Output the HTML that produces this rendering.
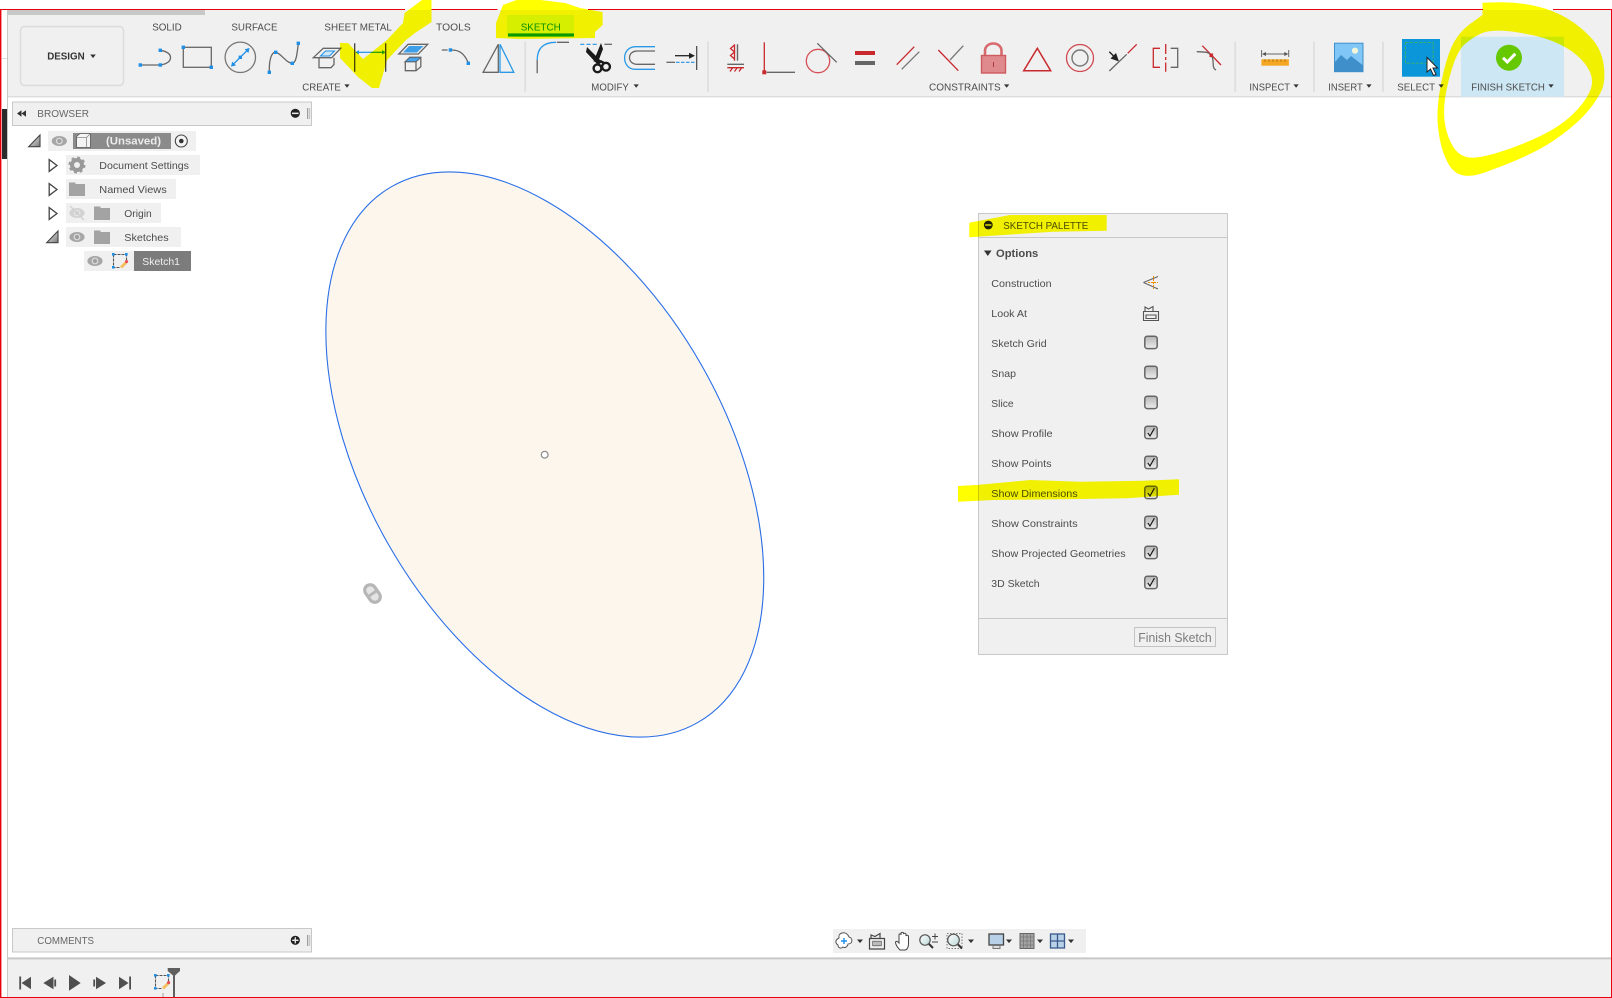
<!DOCTYPE html>
<html><head><meta charset="utf-8"><title>Sketch</title>
<style>
html,body{margin:0;padding:0;background:#fff;width:1612px;height:998px;overflow:hidden}
svg{display:block;position:absolute;left:0;top:0}
text{font-family:"Liberation Sans",Arial,sans-serif;font-size:10.5px;fill:#4c4c4c}
.h{mix-blend-mode:multiply;fill:#ffff00}
.l{stroke:#666;stroke-width:1.3;fill:none}
.b{fill:#1e90e8}
.r{stroke:#c9282d;stroke-width:1.3;fill:none}
.sep{fill:#e0e0e0}
.car{fill:#333}
.row{fill:#f0f0f0}
</style></head><body>
<svg width="1612" height="998" viewBox="0 0 1612 998" xmlns="http://www.w3.org/2000/svg">
<defs>
<linearGradient id="tri" x1="0" y1="0" x2="1" y2="1"><stop offset="0" stop-color="#fff"/><stop offset="1" stop-color="#777"/></linearGradient>
<linearGradient id="cb" x1="0" y1="0" x2="0" y2="1"><stop offset="0" stop-color="#b4b4b4"/><stop offset="1" stop-color="#eeeeee"/></linearGradient>
<linearGradient id="mag" x1="0" y1="0" x2="1" y2="1"><stop offset="0" stop-color="#fff"/><stop offset="1" stop-color="#bcd8d8"/></linearGradient>
<g id="eye"><ellipse rx="7.6" ry="5" fill="#a6a6a6"/><circle r="3.4" fill="#dcdcdc"/><circle r="2.2" fill="#a0a0a0"/></g>
<path id="folder" d="M0 1.5H6.5V3H16V15H0Z" fill="#a3a3a3"/>
<g id="cbx"><rect x="-6.2" y="-6.2" width="12.4" height="12.4" rx="2.6" fill="url(#cb)" stroke="#666" stroke-width="1.5"/></g>
<g id="chk"><rect x="-6.2" y="-6.2" width="12.4" height="12.4" rx="2.6" fill="url(#cb)" stroke="#666" stroke-width="1.5"/><path d="M-3.2 .5L-1 3.6L3.4-4.2" fill="none" stroke="#111" stroke-width="1.1"/></g>
<g id="skt"><path d="M1.5 1.5H14.5V9M1.5 1.5V14.5H8" fill="none" stroke="#555" stroke-dasharray="3 1" stroke-width="1.1"/><rect width="2.6" height="2.6" class="b"/><rect x="13" width="2.6" height="2.6" class="b"/><rect y="13" width="2.6" height="2.6" class="b"/><path d="M9 14.5L14 9.5" stroke="#f2c060" stroke-width="3"/><circle cx="14.6" cy="8.6" r="1.6" fill="#e8505a"/></g>
</defs>

<!-- frame background -->
<rect x="8" y="10" width="1603" height="87" fill="#f0f0f0"/>
<rect x="8" y="96" width="1603" height="1.4" fill="#dcdcdc"/>
<rect x="8" y="10" width="197" height="5" fill="#c8c8c8"/>
<rect x="7" y="10" width="1" height="987" fill="#c8c8c8"/>
<rect x="2" y="58" width="5" height="1" fill="#dedede"/>
<rect x="2" y="109" width="5" height="50" fill="#2b2b2b"/>

<!-- design -->
<rect x="20.5" y="26.5" width="103" height="59" rx="4" fill="#f0f0f0" stroke="#dcdcdc" stroke-width="1.6"/>
<text x="47.2" y="59.6" font-weight="bold" textLength="37.5" lengthAdjust="spacingAndGlyphs" style="font-weight:bold;fill:#333">DESIGN</text>
<path class="car" d="M90.2 54.5h5.6l-2.8 3.6z"/>

<!-- tabs -->
<text x="152.2" y="30.5" textLength="29.6" lengthAdjust="spacingAndGlyphs">SOLID</text>
<text x="231.4" y="30.5" textLength="46.1" lengthAdjust="spacingAndGlyphs">SURFACE</text>
<text x="324.4" y="30.5" textLength="67.5" lengthAdjust="spacingAndGlyphs">SHEET METAL</text>
<text x="436" y="30.5" textLength="34.7" lengthAdjust="spacingAndGlyphs">TOOLS</text>
<rect x="507" y="15" width="67" height="21.7" fill="#d6eff9"/>
<rect x="508" y="33.4" width="66" height="3.2" fill="#0a9a00"/>
<text x="520.7" y="30.5" textLength="40" lengthAdjust="spacingAndGlyphs" style="fill:#0a8f00">SKETCH</text>

<!-- create icons -->
<path class="l" d="M140.3 65H160.3M160.3 50.3Q170.5 52 170.5 57.6T160.3 65"/>
<rect x="138.6" y="63.3" width="3.4" height="3.4" class="b"/><rect x="158.6" y="63.3" width="3.4" height="3.4" class="b"/><rect x="158.6" y="48.6" width="3.4" height="3.4" class="b"/>
<rect class="l" x="183.3" y="47.3" width="28" height="20"/>
<rect x="181.6" y="45.6" width="3.4" height="3.4" class="b"/><rect x="209.6" y="65.6" width="3.4" height="3.4" class="b"/>
<circle class="l" cx="240.3" cy="57.3" r="15.2" stroke-width="1.2" style="stroke:#777"/>
<path d="M232 65.6L248.6 49" stroke="#1e90e8" stroke-width="1.3"/>
<path class="b" d="M231 66.6l1.2-5 3.8 3.8zM249.6 48l-1.2 5-3.8-3.8z"/><rect x="238.6" y="55.6" width="3.4" height="3.4" class="b"/>
<path class="l" d="M269.3 72.3C269 58 272 52 275.7 52.3C281 53 286 63 292.3 63.3C296 63 297 55 298.3 43.3"/>
<rect x="267.6" y="70.6" width="3.4" height="3.4" class="b"/><rect x="274" y="50.6" width="3.4" height="3.4" class="b"/><rect x="290.6" y="61.6" width="3.4" height="3.4" class="b"/><rect x="296.6" y="41.6" width="3.4" height="3.4" class="b"/>
<path class="l" d="M313.3 57.7L323.3 48.3H340.7L331.7 57.7ZM319 57.7V67.7H331L334 64.5V57.7"/>
<path d="M320.5 56L325.5 51H334.5L329.5 56Z" fill="#cfe6f7" stroke="#1e90e8" stroke-width="1"/>
<path d="M354.7 43.3V71.7M385.7 43.3V71.7" stroke="#333" stroke-width="1.2"/>
<path d="M357 52.3H371" stroke="#1e90e8" stroke-width="1.2"/><path d="M371 52.3H384" stroke="#1a9a30" stroke-width="1.2"/>
<path class="b" d="M355.5 52.3l3.4-2.2v4.4z"/><path fill="#1a9a30" d="M385.5 52.3l-3.4-2.2v4.4z"/>
<path class="l" d="M398.8 54L408 44.3H427.7L418.4 54Z"/><path class="b" d="M403 52.5L409 46H423.5L417 52.5Z" opacity=".85"/>
<path class="l" d="M405.3 61.7V70.7H416L420.8 66.7V57.3H409.8L405.3 61.7H416V70.7M416 61.7L420.8 57.3"/><path class="b" d="M405.8 61.4L410 57.8H420.3L415.8 61.4Z" opacity=".8"/>
<path class="l" d="M441.8 50H447.6M452 50C459 50 465 54 468.3 63.3"/>
<rect x="448.7" y="48.3" width="3.4" height="3.4" class="b"/><rect x="466.6" y="61.6" width="3.4" height="3.4" class="b"/>
<path class="l" d="M483.1 72.3L498.3 44.3V72.3Z"/><path d="M500 44.3L513.8 72.3H500Z" fill="none" stroke="#2a9ae8" stroke-width="1.3"/>
<text x="302.3" y="90.7" textLength="38.6" lengthAdjust="spacingAndGlyphs">CREATE</text>
<path class="car" d="M344.4 84.4h5.2l-2.6 3.4z"/>
<rect class="sep" x="524.2" y="41.7" width="2" height="50"/>

<!-- modify -->
<path class="l" d="M537.2 73.3V60M556.8 42.3H569"/>
<path d="M537.2 60Q537.2 42.3 556 42.3" fill="none" stroke="#2a9ae8" stroke-width="1.3"/>
<path d="M580.3 44.3H598.5" stroke="#1e90e8" stroke-width="1.2" stroke-dasharray="4 2.2"/><path class="l" d="M604.4 44.3H612"/>
<path d="M587 47L602 62L598 65L586 52Z" fill="#1a1a1a"/>
<path d="M601 43L603 49L598 62L593.5 61.5Z" fill="#1a1a1a"/>
<path d="M598 62L598.5 65M600 61L604 63" stroke="#1a1a1a" stroke-width="2.4"/>
<circle cx="597.5" cy="68.3" r="3.9" fill="none" stroke="#1a1a1a" stroke-width="2.4"/><circle cx="606" cy="66.7" r="3.9" fill="none" stroke="#1a1a1a" stroke-width="2.4"/>
<path d="M655 46.7H635.4C621 46.7 621 69.3 635.4 69.3H655" fill="none" stroke="#2a9ae8" stroke-width="1.3"/>
<path class="l" d="M655 51H637C627 51 627 64.3 637 64.3H655"/>
<path d="M696.7 46V70" stroke="#444" stroke-width="1.2"/><path class="l" d="M666.4 62.3H675"/>
<path d="M676 62.3H695" stroke="#1e90e8" stroke-width="1.2" stroke-dasharray="3.5 1.5"/>
<path d="M675 55.7H690" stroke="#222" stroke-width="1.3"/><path fill="#222" d="M695 55.7l-6-3v6z"/>
<text x="591.3" y="90.7" textLength="37.5" lengthAdjust="spacingAndGlyphs">MODIFY</text>
<path class="car" d="M633.6 84.4h5.2l-2.6 3.4z"/>
<rect class="sep" x="707" y="41.7" width="2" height="50"/>

<!-- constraints -->
<path d="M737.5 44.3V60.7" stroke="#666" stroke-width="1.4"/><path class="r" d="M734.5 44.3V60.7M734.5 45L730.5 48.5L734.5 52L730.5 55.5L734.5 59"/>
<path d="M727.3 64.3H744" stroke="#666" stroke-width="1.4"/><path class="r" d="M727.3 67.7H744M730 71.5L732.5 68M734.5 71.5L737 68M739 71.5L741.5 68"/>
<path d="M764.3 42.3V71" stroke="#c9282d" stroke-width="1.3"/><rect x="762.3" y="70.3" width="4" height="4" fill="#c9282d"/><path d="M766.7 72.3H795" stroke="#666" stroke-width="1.3"/>
<circle cx="818" cy="61" r="11.7" fill="none" stroke="#d85057" stroke-width="1.3"/><path d="M817.3 43.3L836.7 62.3" stroke="#666" stroke-width="1.3"/>
<rect x="855" y="51" width="20" height="4" fill="#c9282d"/><rect x="855" y="61" width="20" height="4" fill="#666"/>
<path class="r" d="M896.7 64.7L914.3 46.7"/><path d="M901.7 69.3L919.3 51.7" stroke="#777" stroke-width="1.3"/>
<path class="r" d="M938.3 50L958.3 70.7"/><path d="M950 60L963.3 45.7" stroke="#777" stroke-width="1.3"/>
<path d="M985 55.3V51C985 41 1001.5 41 1001.5 51V55.3" fill="none" stroke="#d86a6e" stroke-width="2.6"/>
<rect x="981.5" y="55.5" width="24" height="17.5" fill="#df8b8d" stroke="#cf5a5e" stroke-width="1.4"/><path d="M993.5 62V67" stroke="#a83a3e" stroke-width="1"/>
<path d="M1037.3 48.3L1050.7 70.7H1023.7Z" fill="none" stroke="#c9282d" stroke-width="1.5"/>
<circle cx="1080" cy="58" r="13.5" fill="none" stroke="#d04a50" stroke-width="1.3"/><circle cx="1080" cy="58" r="8" fill="none" stroke="#777" stroke-width="1.4"/>
<path d="M1109.3 51.7L1116 58.4" stroke="#222" stroke-width="1.4"/><path fill="#222" d="M1119 61.5L1110.5 58.5L1116 53Z"/>
<path d="M1109.3 71L1126.7 54.3" stroke="#666" stroke-width="1.3"/><path class="r" d="M1127.7 53.3L1136.7 44.3"/>
<path class="r" d="M1160 48.3H1153.3V67.3H1160"/><path class="l" d="M1170.7 48.3H1177.7V67.3H1170.7"/>
<path d="M1165.7 44V54M1165.7 57V60M1165.7 62.5V71.7" stroke="#c9282d" stroke-width="1.3"/>
<path class="r" d="M1202.3 45.7L1221 65"/><path class="l" d="M1196.7 51.7C1205 52 1208 51.5 1211.3 55.3C1215 60 1211 68 1216 70"/><rect x="1209.5" y="53.5" width="3.6" height="3.6" fill="#c9282d"/>
<text x="929" y="90.7" textLength="71.7" lengthAdjust="spacingAndGlyphs">CONSTRAINTS</text>
<path class="car" d="M1004 84.4h5.3l-2.65 3.4z"/>
<rect class="sep" x="1234.2" y="41.7" width="2" height="50"/>

<!-- inspect -->
<path d="M1261.6 50V57M1288.7 50V57M1263 54H1287.5" stroke="#666" stroke-width="1"/>
<path fill="#555" d="M1262 54l4-2v4zM1288.3 54l-4-2v4z"/>
<rect x="1261.4" y="59.3" width="27.5" height="6.4" fill="#f5a623"/>
<path d="M1265 59.3v2.6M1269 59.3v2.6M1273 59.3v2.6M1277 59.3v2.6M1281 59.3v2.6M1285 59.3v2.6" stroke="#9a6a10" stroke-width=".8"/>
<text x="1249.4" y="90.7" textLength="40.6" lengthAdjust="spacingAndGlyphs">INSPECT</text>
<path class="car" d="M1293.5 84.4h5.2l-2.6 3.4z"/>
<rect class="sep" x="1313" y="41.7" width="2" height="50"/>

<!-- insert -->
<rect x="1334.5" y="43.2" width="28.5" height="28.5" fill="#80c6f7" stroke="#3f8fc8"/>
<path d="M1335 72V62L1341 55L1347 60L1351 56L1362.5 65V72Z" fill="#3f90ca"/>
<circle cx="1355" cy="50.7" r="3.1" fill="#f3f5d8"/>
<text x="1328.3" y="90.7" textLength="34.5" lengthAdjust="spacingAndGlyphs">INSERT</text>
<path class="car" d="M1366.3 84.4h5.3l-2.65 3.4z"/>
<rect class="sep" x="1382" y="41.7" width="2" height="50"/>

<!-- select -->
<rect x="1402" y="39" width="38" height="37.7" fill="#0a96d8"/>
<rect x="1405.5" y="42.5" width="27.7" height="20.8" fill="none" stroke="#3ab070" stroke-width="1" stroke-dasharray="3 1.5"/>
<path d="M1427 57.5V72L1430.5 69L1433.5 75.5L1436 74.5L1433 68H1437.5Z" fill="#fff" stroke="#222" stroke-width="1"/>
<text x="1397.3" y="90.7" textLength="37.7" lengthAdjust="spacingAndGlyphs">SELECT</text>
<path class="car" d="M1438.5 84.4h5.3l-2.65 3.4z"/>

<!-- finish sketch -->
<rect x="1461" y="36.7" width="103" height="60" fill="#cde8f4"/>
<circle cx="1509" cy="57.7" r="13" fill="#66c800"/>
<path d="M1503 57.8L1507.3 62L1515.3 53.8" fill="none" stroke="#fff" stroke-width="3"/>
<text x="1471.3" y="90.7" textLength="73.6" lengthAdjust="spacingAndGlyphs">FINISH SKETCH</text>
<path class="car" d="M1548.4 84.4h5.3l-2.65 3.4z"/>

<!-- browser panel -->
<rect x="12.5" y="102" width="299" height="23.5" fill="#f0f0f0" stroke="#c8c8c8"/>
<path fill="#333" d="M17 113.5l4.5-3.2v6.4zM21.5 113.5l4.5-3.2v6.4z"/>
<text x="37.3" y="116.8" textLength="51.7" lengthAdjust="spacingAndGlyphs" style="fill:#666">BROWSER</text>
<circle cx="295.3" cy="113.3" r="4.6" fill="#222"/><rect x="292" y="112.6" width="6.6" height="1.5" fill="#eee"/>
<path d="M307.7 108V119" stroke="#888"/><path d="M309.7 108V119" stroke="#bbb"/>

<!-- tree -->
<rect class="row" x="48" y="131" width="148" height="20"/>
<path d="M40 135V146.7H28.7Z" fill="url(#tri)" stroke="#444" stroke-width="1.1"/>
<use href="#eye" x="59.3" y="141"/>
<rect x="73" y="133" width="98" height="16" fill="#8b8b8b"/>
<path d="M76.5 136.5L80 133.5H90.5V147.5H76.5Z" fill="#f4f4f4" stroke="#555" stroke-width=".8"/><path d="M86.5 137.5V147.5M76.5 137.5H86.5L90.5 133.5" fill="none" stroke="#888" stroke-width=".8"/>
<text x="106" y="144.7" textLength="55" lengthAdjust="spacingAndGlyphs" style="font-weight:bold;fill:#ececec;font-size:11px">(Unsaved)</text>
<circle cx="181.3" cy="141" r="6" fill="#f4f4f4" stroke="#444" stroke-width="1.1"/><circle cx="181.3" cy="141" r="2.3" fill="#333"/>

<rect class="row" x="66" y="155" width="134" height="20"/>
<path d="M49.2 159.6V171.4L57 165.5Z" fill="#fff" stroke="#444" stroke-width="1.3"/>
<circle cx="77" cy="165" r="5" fill="none" stroke="#9a9a9a" stroke-width="4"/>
<circle cx="77" cy="165" r="7.4" fill="none" stroke="#9a9a9a" stroke-width="2.2" stroke-dasharray="2.9 2.9"/>
<text x="99.3" y="169" textLength="89.7" lengthAdjust="spacingAndGlyphs">Document Settings</text>

<rect class="row" x="66" y="179" width="110" height="20"/>
<path d="M49.2 183.6V195.4L57 189.5Z" fill="#fff" stroke="#444" stroke-width="1.3"/>
<use href="#folder" x="69" y="181"/>
<text x="99.3" y="193" textLength="67.4" lengthAdjust="spacingAndGlyphs">Named Views</text>

<rect class="row" x="66" y="203" width="95" height="20"/>
<path d="M49.2 207.6V219.4L57 213.5Z" fill="#fff" stroke="#444" stroke-width="1.3"/>
<g opacity=".4"><use href="#eye" x="77" y="213"/><path d="M70 206L84 220" stroke="#a3a3a3" stroke-width="1.4"/></g>
<use href="#folder" x="94" y="205"/>
<text x="124.3" y="217" textLength="27.4" lengthAdjust="spacingAndGlyphs">Origin</text>

<rect class="row" x="66" y="227" width="115" height="20"/>
<path d="M58 231V242.7H46.7Z" fill="url(#tri)" stroke="#444" stroke-width="1.1"/>
<use href="#eye" x="77" y="237"/>
<use href="#folder" x="94" y="229"/>
<text x="124.3" y="241" textLength="44.4" lengthAdjust="spacingAndGlyphs">Sketches</text>

<rect class="row" x="84" y="251" width="50" height="20"/>
<rect x="134" y="251" width="57" height="20" fill="#7c7c7c"/>
<use href="#eye" x="95" y="261"/>
<use href="#skt" x="112" y="253"/>
<text x="142.3" y="265" textLength="37.7" lengthAdjust="spacingAndGlyphs" style="fill:#f0f0f0">Sketch1</text>

<!-- ellipse -->
<ellipse cx="544.8" cy="454.5" rx="308.6" ry="180.4" transform="rotate(60.3 544.8 454.5)" fill="#fdf6ec" stroke="#2a6fe8" stroke-width="1.1"/>
<circle cx="544.7" cy="454.7" r="3.4" fill="#fdfdfd" stroke="#8a8a8a" stroke-width="1.2"/>
<g transform="rotate(-35 372.5 593.5)"><rect x="367" y="584" width="11" height="19" rx="5.5" fill="#e4e4e4" stroke="#b6b6b6" stroke-width="3.2"/><rect x="367" y="592.2" width="11" height="2.8" fill="#b6b6b6"/></g>

<!-- sketch palette -->
<rect x="978.5" y="213.5" width="249" height="441" fill="#f0f0f0" stroke="#c8c8c8"/>
<rect x="979" y="237" width="248" height="1" fill="#c8c8c8"/>
<rect x="979" y="618" width="248" height="1" fill="#c8c8c8"/>
<circle cx="988.3" cy="225" r="4.4" fill="#222"/><rect x="985.2" y="224.3" width="6.2" height="1.4" fill="#eee"/>
<text x="1003.3" y="229" textLength="85" lengthAdjust="spacingAndGlyphs">SKETCH PALETTE</text>
<path fill="#333" d="M984 250.5h7.6l-3.8 5.5z"/>
<text x="996" y="257" textLength="42.3" lengthAdjust="spacingAndGlyphs" style="font-weight:bold;font-size:11px">Options</text>
<text x="991.3" y="287" textLength="60.3" lengthAdjust="spacingAndGlyphs">Construction</text>
<text x="991.3" y="317" textLength="35.7" lengthAdjust="spacingAndGlyphs">Look At</text>
<text x="991.3" y="347" textLength="55.3" lengthAdjust="spacingAndGlyphs">Sketch Grid</text>
<text x="991.3" y="377" textLength="24.7" lengthAdjust="spacingAndGlyphs">Snap</text>
<text x="991.3" y="407" textLength="22.3" lengthAdjust="spacingAndGlyphs">Slice</text>
<text x="991.3" y="437" textLength="61.3" lengthAdjust="spacingAndGlyphs">Show Profile</text>
<text x="991.3" y="467" textLength="60.3" lengthAdjust="spacingAndGlyphs">Show Points</text>
<text x="991.3" y="497" textLength="86.3" lengthAdjust="spacingAndGlyphs">Show Dimensions</text>
<text x="991.3" y="527" textLength="86.3" lengthAdjust="spacingAndGlyphs">Show Constraints</text>
<text x="991.3" y="557" textLength="134.3" lengthAdjust="spacingAndGlyphs">Show Projected Geometries</text>
<text x="991.3" y="587" textLength="48.3" lengthAdjust="spacingAndGlyphs">3D Sketch</text>
<path d="M1143.5 282.5L1158 276.5M1143.5 282.5L1158 289" stroke="#666" stroke-width="1.1" fill="none"/>
<path d="M1148 282.5H1158M1153.5 276V289" stroke="#f08c00" stroke-width="1" stroke-dasharray="2 1" fill="none"/>
<path d="M1143.5 311.5V320.5H1158.5V311.5ZM1146 315H1156V318.5H1146ZM1145 311V307L1148.5 309L1153 306.5V311" fill="none" stroke="#555" stroke-width="1.1"/>
<use href="#cbx" x="1151" y="342.4"/>
<use href="#cbx" x="1151" y="372.4"/>
<use href="#cbx" x="1151" y="402.4"/>
<use href="#chk" x="1151" y="432.4"/>
<use href="#chk" x="1151" y="462.4"/>
<use href="#chk" x="1151" y="492.4"/>
<use href="#chk" x="1151" y="522.4"/>
<use href="#chk" x="1151" y="552.4"/>
<use href="#chk" x="1151" y="582.4"/>
<rect x="1134.5" y="627.5" width="81" height="19" fill="#f0f0f0" stroke="#c4c4c4"/>
<text x="1138.3" y="642" textLength="73.4" lengthAdjust="spacingAndGlyphs" style="font-size:12.5px;fill:#7c7c7c">Finish Sketch</text>

<!-- comments -->
<rect x="12.5" y="928.5" width="299" height="23.5" fill="#f0f0f0" stroke="#c8c8c8"/>
<text x="37.3" y="944" textLength="56.7" lengthAdjust="spacingAndGlyphs" style="fill:#666">COMMENTS</text>
<circle cx="295.3" cy="940.3" r="4.6" fill="#222"/><path d="M292.2 940.3H298.4M295.3 937.2V943.4" stroke="#eee" stroke-width="1.3"/>
<path d="M307.7 935V946" stroke="#888"/><path d="M309.7 935V946" stroke="#bbb"/>

<!-- navbar -->
<rect x="833" y="929" width="253" height="24" fill="#f0f0f0"/>
<path d="M842 933C838 934 839 937 839 938C835 940 835 943 838 945C838 948 841 949 843 947C846 949 848 945 848 944C853 944 853 938 849 937C848 934 845 932 842 933Z" fill="#fff" stroke="#555" stroke-width="1"/>
<path d="M841 941H847M844 938V944" stroke="#1e90e8" stroke-width="1.4"/>
<path class="car" d="M857 939.5h6l-3 3.6z"/>
<path d="M869.5 938.5V949H884.5V938.5ZM873 941.5H881V945.5H873ZM871 938V935L875 936.5L880 933.5V938" fill="none" stroke="#444" stroke-width="1.2"/>
<rect x="873" y="941.5" width="8" height="4" fill="#bbb"/>
<path d="M900 950C897 947 895.5 944 895.5 942C896 941 897.5 941 899 943V935C899 933.5 901 933.5 901 935V933.5C901 932 903.5 932 903.5 933.5V934C904 933 906 933 906 934.5V936C906.5 935 908.5 935 908.5 936.5V944C908.5 947 907 950 905 950Z" fill="#fff" stroke="#444" stroke-width="1"/>
<circle cx="925" cy="940" r="5.2" fill="url(#mag)" stroke="#555" stroke-width="1.2"/><path d="M929 944L933 948" stroke="#333" stroke-width="2"/>
<path d="M932 936.5H938M935 933.5V939.5M932 942H938" stroke="#444" stroke-width="1"/>
<rect x="947" y="933.5" width="15" height="15" fill="none" stroke="#777" stroke-dasharray="1.5 1.5"/>
<circle cx="953.5" cy="940" r="5.8" fill="url(#mag)" stroke="#555" stroke-width="1.2"/><path d="M958 944.5L962 948.5" stroke="#333" stroke-width="2"/>
<path class="car" d="M968 939.5h6l-3 3.6z"/>
<rect x="989" y="934" width="14.5" height="11" fill="#b8d0e8" stroke="#444" stroke-width="1.3"/><path d="M993 948.5H1000V945.5H993Z" fill="#ddd" stroke="#777"/>
<path class="car" d="M1006 939.5h6l-3 3.6z"/>
<rect x="1020" y="933.5" width="14" height="15" fill="#a4a4a4" stroke="#666"/>
<path d="M1023.5 933.5V948.5M1027 933.5V948.5M1030.5 933.5V948.5M1020 937H1034M1020 941H1034M1020 945H1034" stroke="#777" stroke-width=".8"/>
<path class="car" d="M1037 939.5h6l-3 3.6z"/>
<rect x="1050.5" y="934" width="14" height="14" fill="#b8d0e8" stroke="#3a5a8c" stroke-width="1.3"/><path d="M1057.5 934V948M1050.5 941H1064.5" stroke="#3a5a8c" stroke-width="1.3"/>
<path class="car" d="M1068 939.5h6l-3 3.6z"/>

<!-- timeline -->
<rect x="8" y="959" width="1603" height="38" fill="#f0f0f0"/>
<rect x="8" y="957.4" width="1603" height="2" fill="#c8c8c8"/>
<g fill="#4f4f4f">
<rect x="19.3" y="976.5" width="1.8" height="13"/><path d="M31 976.7V989.3L21.5 983Z"/>
<path d="M43.3 983L53.5 976.7V989.3Z"/><rect x="54.3" y="979.5" width="1.8" height="7"/>
<path d="M69 975L80.7 983L69 990.7Z"/>
<rect x="93.3" y="979.5" width="1.8" height="7"/><path d="M96 976.7L106 983L96 989.3Z"/>
<path d="M119 976.7L128.5 983L119 989.3Z"/><rect x="129.2" y="976.5" width="1.8" height="13"/>
</g>
<use href="#skt" x="154" y="974" />
<rect x="162.3" y="993" width="1.5" height="4" fill="#bbb"/>
<path d="M167.7 968H180V971L175 975.5V997H173V975.5L167.7 971Z" fill="#5f5f5f"/>

<!-- red frame -->
<g fill="#e8000d">
<rect x="0" y="9" width="405" height="1"/>
<rect x="431.5" y="9" width="66" height="1"/>
<rect x="588" y="9" width="895" height="1"/>
<rect x="1553" y="9" width="59" height="1"/>
<rect x="0" y="9" width="1.4" height="989"/>
<rect x="1611" y="9" width="1" height="989"/>
<rect x="0" y="997" width="1612" height="1"/>
</g>

<!-- highlighter -->
<polygon class="h" points="431.5,0 422,0 404.6,13 403,23 387,40 363,59 348,43 340,43 340,58 358,77 372,88 379,88 387,60 406,40 415,33 431.5,22"/>
<polygon class="h" points="516.5,0 540.7,0 565,3 580,8 602.6,12 602.6,25 595,32 595,38 520,39 496,38 496,23 503,5"/>
<polygon class="h" points="969.3,222.7 1010,215 1106.7,215 1106.7,230.7 1053,231.7 969.3,237.3"/>
<polygon class="h" points="958,486 976.7,485 1030,480 1080,481.7 1143.3,480.7 1179,479.3 1179,494.7 1126.7,498.3 1080,499 993.3,500 958,501.7"/>
<path class="h" fill-rule="evenodd" d="M1482.5 15L1482.5 2.7L1500 2.3Q1517.7 2 1535.3 6Q1553 10 1567 18.3Q1581 26.7 1591.5 38.3Q1602 50 1603.9 66.6Q1605.8 83.3 1600.4 93Q1595 103 1586.3 113Q1577.6 123 1561.8 134.8Q1546 146.7 1528.3 154.8Q1510.7 163 1491.3 170Q1472 178 1461.5 175Q1451 172 1445.6 158Q1440.3 146.7 1438.1 128Q1436 110 1440.8 85Q1445.6 60 1451.8 46.5Q1458 33 1470 24ZM1480 34Q1487.8 30 1502.7 30.8Q1517.7 31.7 1535.3 35.8Q1553 40 1567 48.3Q1581 56.7 1588 68.3Q1595 80 1589.8 91.5Q1584.6 103 1572.3 114.8Q1560 126.7 1538.8 136.7Q1517.7 146.7 1496.6 153Q1475.5 159.3 1466.7 157.1Q1457.9 155 1452.6 145.8Q1447.3 136.7 1445.1 124.8Q1443 113 1445.1 98Q1447.3 83.3 1452.6 66.6Q1458 50 1465 44Q1472 38 1480 34Z"/>
</svg>
</body></html>
